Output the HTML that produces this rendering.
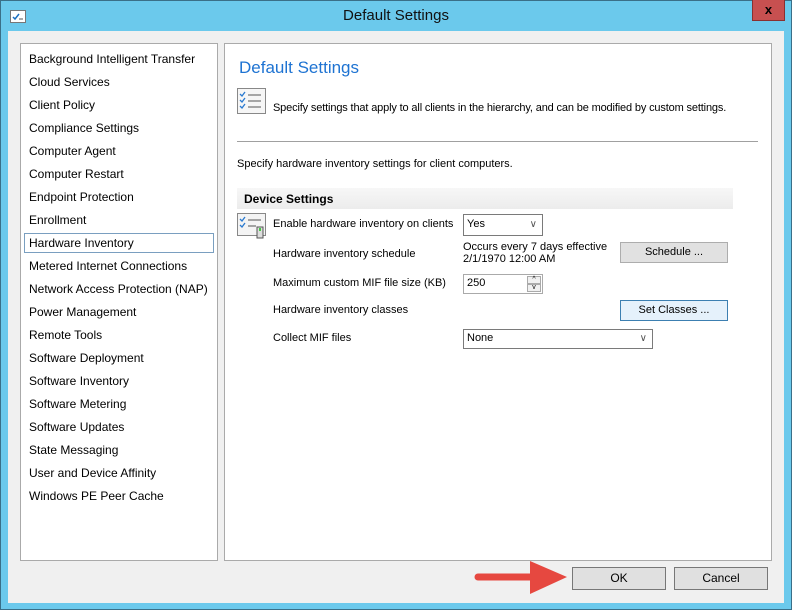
<!DOCTYPE html>
<html><head><meta charset="utf-8"><style>
*{margin:0;padding:0;box-sizing:border-box}
body{width:792px;height:610px;position:relative;overflow:hidden;background:#6bc9ec;font-family:"Liberation Sans",sans-serif;font-size:12px;color:#000}
.a{position:absolute;white-space:nowrap}
.btn{position:absolute;background:#e1e1e1;border:1px solid #adadad;text-align:center;font-size:11px}
.dd{position:absolute;background:#fff;border:1px solid #7a7a7a;padding-left:3px;font-size:11px}
.li{position:absolute;left:29px;font-size:12px}
.r{font-size:11px}
</style></head><body>
<div class="a" style="left:0;top:0;width:792px;height:610px;border:1px solid #3a6f88"></div>
<svg class="a" style="left:10px;top:10px" width="16" height="13"><rect x="0.5" y="0.5" width="15" height="12" fill="#fff" stroke="#777"/><path d="M3 7l2 2 4-5" stroke="#1a6fc0" stroke-width="1.5" fill="none"/><path d="M9 9h4" stroke="#555"/></svg>
<div class="a" style="left:0;top:7px;width:792px;text-align:center;font-size:15px;color:#111">Default Settings</div>
<div class="a" style="left:752px;top:0;width:33px;height:21px;background:#c75050;border:1px solid #8a3030;border-top:none;color:#000;font-weight:bold;text-align:center;font-size:13px;line-height:19px">x</div>
<div class="a" style="left:8px;top:31px;width:776px;height:572px;background:#f0f0f0"></div>
<div class="a" style="left:20px;top:43px;width:198px;height:518px;background:#fff;border:1px solid #aaa"></div>
<div class="a" style="left:224px;top:43px;width:548px;height:518px;background:#fff;border:1px solid #aaa"></div>
<div class="a" style="left:24px;top:233px;width:190px;height:20px;border:1px solid #7a9fc0"></div>
<div class="li" style="top:52px">Background Intelligent Transfer</div>
<div class="li" style="top:75px">Cloud Services</div>
<div class="li" style="top:98px">Client Policy</div>
<div class="li" style="top:121px">Compliance Settings</div>
<div class="li" style="top:144px">Computer Agent</div>
<div class="li" style="top:167px">Computer Restart</div>
<div class="li" style="top:190px">Endpoint Protection</div>
<div class="li" style="top:213px">Enrollment</div>
<div class="li" style="top:236px">Hardware Inventory</div>
<div class="li" style="top:259px">Metered Internet Connections</div>
<div class="li" style="top:282px">Network Access Protection (NAP)</div>
<div class="li" style="top:305px">Power Management</div>
<div class="li" style="top:328px">Remote Tools</div>
<div class="li" style="top:351px">Software Deployment</div>
<div class="li" style="top:374px">Software Inventory</div>
<div class="li" style="top:397px">Software Metering</div>
<div class="li" style="top:420px">Software Updates</div>
<div class="li" style="top:443px">State Messaging</div>
<div class="li" style="top:466px">User and Device Affinity</div>
<div class="li" style="top:489px">Windows PE Peer Cache</div>
<div class="a" style="left:239px;top:58px;font-size:17px;color:#1e73d2">Default Settings</div>
<svg class="a" style="left:237px;top:88px" width="30" height="27"><rect x="0.5" y="0.5" width="28" height="25" fill="#f6f6f6" stroke="#888"/><path d="M3 6l2 2 3-4M3 12l2 2 3-4M3 18l2 2 3-4" stroke="#2a7ad0" stroke-width="1.3" fill="none"/><path d="M11 7h13M11 13h13M11 19h13" stroke="#555"/></svg>
<div class="a" style="left:273px;top:102px;font-size:11px;letter-spacing:-0.15px">Specify settings that apply to all clients in the hierarchy, and can be modified by custom settings.</div>
<div class="a" style="left:237px;top:141px;width:521px;height:1px;background:#a0a0a0"></div>
<div class="a" style="left:237px;top:158px;font-size:11px">Specify hardware inventory settings for client computers.</div>
<div class="a" style="left:237px;top:188px;width:496px;height:21px;background:linear-gradient(#f7f7f7,#ececec)"></div>
<div class="a" style="left:244px;top:192px;font-weight:bold">Device Settings</div>
<svg class="a" style="left:237px;top:213px" width="32" height="28"><rect x="0.5" y="0.5" width="28" height="22" fill="#f4f4f4" stroke="#888"/><path d="M3 6l2 2 3-4M3 12l2 2 3-4" stroke="#2a7ad0" stroke-width="1.3" fill="none"/><path d="M11 7h13M11 13h8" stroke="#555"/><rect x="20" y="14" width="6" height="11" fill="#ddd" stroke="#555"/><rect x="22" y="15" width="2" height="3" fill="#4c4"/></svg>
<div class="a r" style="left:273px;top:218px">Enable hardware inventory on clients</div>
<div class="a r" style="left:273px;top:248px">Hardware inventory schedule</div>
<div class="a r" style="left:273px;top:277px">Maximum custom MIF file size (KB)</div>
<div class="a r" style="left:273px;top:304px">Hardware inventory classes</div>
<div class="a r" style="left:273px;top:332px">Collect MIF files</div>
<div class="dd" style="left:463px;top:214px;width:80px;height:22px;line-height:19px">Yes<span class="a" style="right:5px;top:0;color:#555;font-size:10px">&#8744;</span></div>
<div class="a r" style="left:463px;top:241px;line-height:12px">Occurs every 7 days effective<br>2/1/1970 12:00 AM</div>
<div class="btn" style="left:620px;top:242px;width:108px;height:21px;line-height:19px">Schedule ...</div>
<div class="dd" style="left:463px;top:274px;width:80px;height:20px;line-height:17px;border-color:#aaa">250
<div class="a" style="left:63px;top:1px;width:14px;height:8px;border:1px solid #aaa;background:#f0f0f0;font-size:7px;line-height:6px;text-align:center">^</div>
<div class="a" style="left:63px;top:9px;width:14px;height:8px;border:1px solid #aaa;background:#f0f0f0;font-size:7px;line-height:6px;text-align:center">v</div></div>
<div class="btn" style="left:620px;top:300px;width:108px;height:21px;line-height:19px;border-color:#3c7fb1;background:#e5f1fb">Set Classes ...</div>
<div class="dd" style="left:463px;top:329px;width:190px;height:20px;line-height:17px">None<span class="a" style="right:5px;top:0;color:#555;font-size:10px">&#8744;</span></div>
<svg class="a" style="left:470px;top:558px" width="100" height="42"><path d="M8 19h58" stroke="#e64840" stroke-width="7" stroke-linecap="round"/><path d="M60 3L97 19L60 36Z" fill="#e64840"/></svg>
<div class="btn" style="left:572px;top:567px;width:94px;height:23px;line-height:21px;border-color:#777;background:#e0e0e0;font-size:12px">OK</div>
<div class="btn" style="left:674px;top:567px;width:94px;height:23px;line-height:21px;border-color:#777;background:#e0e0e0;font-size:12px">Cancel</div>
</body></html>
